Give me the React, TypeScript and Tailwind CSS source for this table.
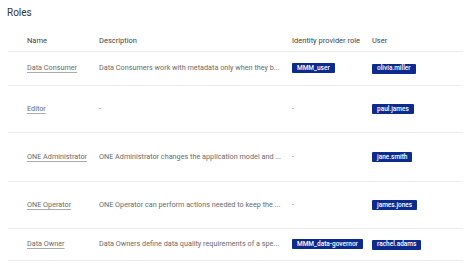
import React from 'react';

interface Role {
  name: string;
  description: string;
  idpRoles: string[];
  users: string[];
  height: string;
}

const roles: Role[] = [
  {
    name: 'Data Consumer',
    description: 'Data Consumers work with metadata only when they b...',
    idpRoles: ['MMM_user'],
    users: ['olivia.miller'],
    height: 'h-[34px]',
  },
  { name: 'Editor', description: '-', idpRoles: [], users: ['paul.james'], height: 'h-[47px]' },
  {
    name: 'ONE Administrator',
    description: 'ONE Administrator changes the application model and ...',
    idpRoles: [],
    users: ['jane.smith'],
    height: 'h-[49px]',
  },
  {
    name: 'ONE Operator',
    description: 'ONE Operator can perform actions needed to keep the ...',
    idpRoles: [],
    users: ['james.jones'],
    height: 'h-[47px]',
  },
  {
    name: 'Data Owner',
    description: 'Data Owners define data quality requirements of a spe...',
    idpRoles: ['MMM_data-governor'],
    users: ['rachel.adams'],
    height: 'h-[32px]',
  },
];

const Badge: React.FC<{ label: string }> = ({ label }) => (
  <span className="inline-flex items-center h-[10px] px-[5px] rounded-[1px] bg-[#0d2b8f] text-white text-[6.5px] font-medium leading-none whitespace-nowrap">
    {label}
  </span>
);

const cols = 'grid grid-cols-[72px_193px_80px_1fr] items-center pl-[19px]';

const App: React.FC = () => {
  return (
    <div className="w-[474px] h-[269px] bg-white font-['Roboto',sans-serif] overflow-hidden">
      <h2 className="pl-[7px] pt-[6px] text-[10px] leading-[14px] text-[#333]">Roles</h2>
      <div className="mx-[8px] mt-[10px] w-[455px]">
        <div className={`${cols} h-[22px] border-b border-[#ececec] text-[7.5px] text-[#444]`}>
          <span>Name</span>
          <span>Description</span>
          <span>Identity provider role</span>
          <span>User</span>
        </div>
        {roles.map((role) => (
          <div
            key={role.name}
            className={`${cols} ${role.height} border-b border-[#ececec] text-[7.25px] text-[#6a6a6a]`}
          >
            <span className="whitespace-nowrap underline decoration-[#aaa] underline-offset-2">{role.name}</span>
            <span className="whitespace-nowrap">{role.description}</span>
            <span>
              {role.idpRoles.length ? role.idpRoles.map((r) => <Badge key={r} label={r} />) : '-'}
            </span>
            <span className="flex gap-1">
              {role.users.map((u) => (
                <Badge key={u} label={u} />
              ))}
            </span>
          </div>
        ))}
      </div>
    </div>
  );
};

export default App;
